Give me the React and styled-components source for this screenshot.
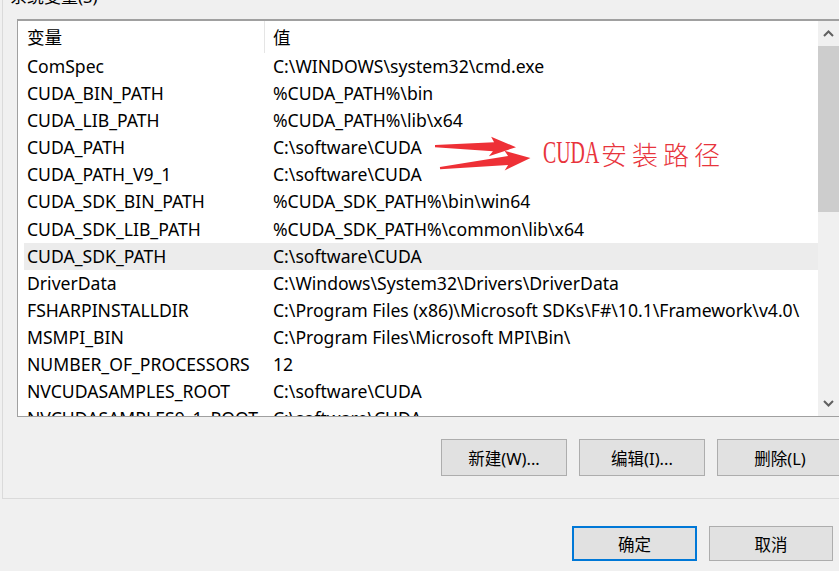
import React from "react";
import styled, { createGlobalStyle } from "styled-components";

const GlobalStyle = createGlobalStyle`
  html, body {
    margin: 0;
    padding: 0;
    background: #f0f0f0;
    overflow: hidden;
  }
  body {
    font-family: "Noto Sans", "Noto Sans CJK SC", sans-serif;
    color: #000;
  }
`;

const rows = [
  ["ComSpec", "C:\\WINDOWS\\system32\\cmd.exe"],
  ["CUDA_BIN_PATH", "%CUDA_PATH%\\bin"],
  ["CUDA_LIB_PATH", "%CUDA_PATH%\\lib\\x64"],
  ["CUDA_PATH", "C:\\software\\CUDA"],
  ["CUDA_PATH_V9_1", "C:\\software\\CUDA"],
  ["CUDA_SDK_BIN_PATH", "%CUDA_SDK_PATH%\\bin\\win64"],
  ["CUDA_SDK_LIB_PATH", "%CUDA_SDK_PATH%\\common\\lib\\x64"],
  ["CUDA_SDK_PATH", "C:\\software\\CUDA"],
  ["DriverData", "C:\\Windows\\System32\\Drivers\\DriverData"],
  ["FSHARPINSTALLDIR", "C:\\Program Files (x86)\\Microsoft SDKs\\F#\\10.1\\Framework\\v4.0\\"],
  ["MSMPI_BIN", "C:\\Program Files\\Microsoft MPI\\Bin\\"],
  ["NUMBER_OF_PROCESSORS", "12"],
  ["NVCUDASAMPLES_ROOT", "C:\\software\\CUDA"],
  ["NVCUDASAMPLES9_1_ROOT", "C:\\software\\CUDA"],
];

const Page = styled.div`
  position: relative;
  width: 850px;
  height: 571px;
  padding-left: 2px;
  box-sizing: border-box;
  display: flex;
  flex-direction: column;
`;

const Group = styled.section`
  height: 499px;
  box-sizing: border-box;
  border-left: 1px solid #dadada;
  border-bottom: 1px solid #dadada;
  padding: 0 7px 0 14px;
  display: flex;
  flex-direction: column;
`;

const GroupLabel = styled.div`
  margin: -13px 0 0 -7px;
  height: 20px;
  line-height: 20px;
  font-size: 17px;
`;

const ListBox = styled.div`
  margin-top: 12px;
  height: 398px;
  box-sizing: border-box;
  background: #fff;
  border: 1px solid #a0a0a0;
  border-top: 2px solid #a0a0a0;
  display: flex;
  overflow: hidden;
`;

const ListArea = styled.div`
  flex: 1;
  padding-left: 6px;
  overflow: hidden;
`;

const Row = styled.div`
  display: grid;
  grid-template-columns: 240px 1fr;
  height: ${({ $header }) => ($header ? "32px" : "27.1px")};
  line-height: ${({ $header }) => ($header ? "32px" : "27px")};
  background: ${({ $selected }) => ($selected ? "#ececec" : "transparent")};
  font-size: 17.6px;
  white-space: nowrap;
`;

const NameCell = styled.div`
  padding-left: 3px;
  overflow: hidden;
`;

const ValueCell = styled.div`
  padding-left: 8px;
  overflow: hidden;
  border-left: 1px solid ${({ $header }) => ($header ? "#e5e5e5" : "transparent")};
`;

const Scrollbar = styled.div`
  width: 24px;
  background: #f0f0f0;
  display: flex;
  flex-direction: column;
`;

const ArrowZone = styled.div`
  height: 25px;
  display: flex;
  align-items: center;
  justify-content: center;
  padding-right: 3px;
`;

const Thumb = styled.div`
  height: 166px;
  background: #cdcdcd;
`;

const Track = styled.div`
  flex: 1;
`;

const ButtonRow = styled.div`
  display: flex;
  justify-content: flex-end;
  gap: 12px;
  margin-top: 22px;
`;

const Button = styled.button`
  width: ${({ $w }) => $w || 126}px;
  height: ${({ $h }) => $h || 37}px;
  box-sizing: border-box;
  background: #e1e1e1;
  border: ${({ $default }) => ($default ? "2px solid #0078d7" : "1px solid #adadad")};
  font-family: "Noto Sans", "Noto Sans CJK SC", sans-serif;
  font-size: 16.5px;
  color: #000;
  padding: 0;
`;

const Footer = styled.div`
  display: flex;
  justify-content: flex-end;
  gap: 12px;
  padding: 27px 17px 0 0;
`;

const Note = styled.div`
  position: absolute;
  left: 430px;
  top: 130px;
  display: flex;
  align-items: center;
  pointer-events: none;
`;

const NoteText = styled.div`
  display: flex;
  align-items: center;
  margin-left: 3px;
  color: #e8343c;
  height: 46px;
`;

const Latin = styled.span`
  display: inline-block;
  width: 57px;
  font-family: "Liberation Serif", serif;
  font-size: 31px;
  transform: scaleX(0.64);
  transform-origin: left center;
  white-space: nowrap;
`;

const Hanzi = styled.span`
  font-family: "Noto Sans CJK SC", sans-serif;
  font-size: 26px;
  font-weight: 300;
  letter-spacing: 5px;
  margin-left: 1px;
`;

const Chevron = ({ up }) => (
  <svg width="11" height="7" viewBox="0 0 11 7">
    <path
      d={up ? "M1 6 L5.5 1.5 L10 6" : "M1 1 L5.5 5.5 L10 1"}
      fill="none"
      stroke="#606060"
      strokeWidth="2"
    />
  </svg>
);

const arrowShape = (L) =>
  `0,-1 ${L - 22},-4.5 ${L - 25},-10 ${L},0 ${L - 27},9.5 ${L - 23},4.5 0,1.2`;

const Arrows = () => (
  <svg width="110" height="46" viewBox="430 130 110 46">
    <polygon points={arrowShape(81)} fill="#ee3036" transform="translate(435 146) rotate(0.8)" />
    <polygon points={arrowShape(91)} fill="#ee3036" transform="translate(440 168) rotate(-6.3)" />
  </svg>
);

export default function App() {
  return (
    <>
      <GlobalStyle />
      <Page>
        <Group>
          <GroupLabel>系统变量(S)</GroupLabel>
          <ListBox>
            <ListArea>
              <Row $header>
                <NameCell>变量</NameCell>
                <ValueCell $header>值</ValueCell>
              </Row>
              {rows.map(([name, value]) => (
                <Row key={name} $selected={name === "CUDA_SDK_PATH"}>
                  <NameCell>{name}</NameCell>
                  <ValueCell>{value}</ValueCell>
                </Row>
              ))}
            </ListArea>
            <Scrollbar>
              <ArrowZone>
                <Chevron up />
              </ArrowZone>
              <Thumb />
              <Track />
              <ArrowZone>
                <Chevron />
              </ArrowZone>
            </Scrollbar>
          </ListBox>
          <ButtonRow>
            <Button>新建(W)...</Button>
            <Button>编辑(I)...</Button>
            <Button>删除(L)</Button>
          </ButtonRow>
        </Group>
        <Footer>
          <Button $default $w={125} $h={35}>确定</Button>
          <Button $w={124} $h={35}>取消</Button>
        </Footer>
        <Note>
          <Arrows />
          <NoteText>
            <Latin>CUDA</Latin>
            <Hanzi>安装路径</Hanzi>
          </NoteText>
        </Note>
      </Page>
    </>
  );
}
